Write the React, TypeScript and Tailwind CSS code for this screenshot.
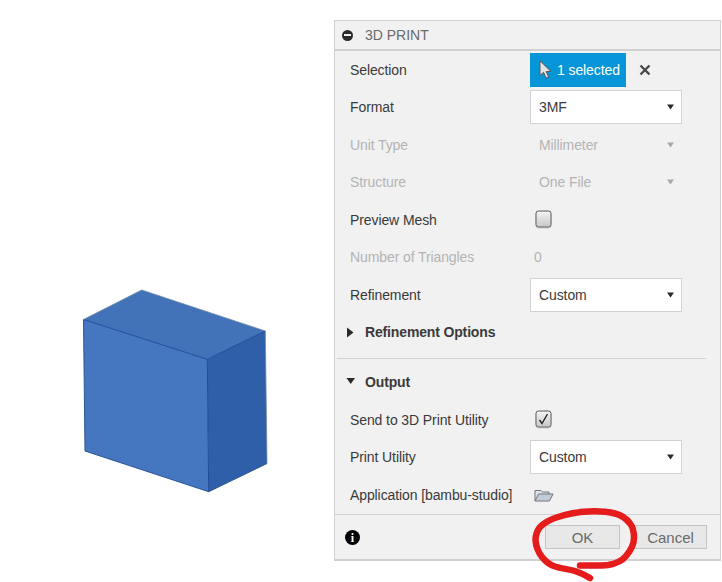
import React from "react";

const FONT = "font-['Liberation_Sans',Arial,sans-serif]";

function Caret({ disabled = false }: { disabled?: boolean }) {
  return (
    <svg width="7" height="6" viewBox="0 0 7 6" className="shrink-0">
      <path d="M0 0.5H7L3.5 5.5Z" fill={disabled ? "#a8a8a8" : "#2a2a2a"} />
    </svg>
  );
}

function Row({ label, disabled = false, children }: { label: string; disabled?: boolean; children?: React.ReactNode }) {
  return (
    <div className="h-[37.5px] flex items-center pl-[15px] shrink-0">
      <div className={`w-[180px] shrink-0 whitespace-nowrap tracking-[-0.1px] ${disabled ? "text-[#b4b4b4]" : "text-[#3a3a3a]"}`}>{label}</div>
      {children}
    </div>
  );
}

function Select({ value, disabled = false }: { value: string; disabled?: boolean }) {
  return (
    <div
      className={`w-[152px] h-[34px] flex items-center justify-between pl-[8px] pr-[7px] border tracking-[-0.1px] ${
        disabled ? "border-transparent text-[#b4b4b4]" : "bg-white border-[#d2d2d2] text-[#3a3a3a]"
      }`}
    >
      <span>{value}</span>
      <Caret disabled={disabled} />
    </div>
  );
}

function Check({ checked = false }: { checked?: boolean }) {
  return (
    <div className="ml-[6px] w-[16px] h-[17px] rounded-[3px] border border-[#555] bg-gradient-to-b from-[#f4f4f4] to-[#c8c8c8] flex items-center justify-center shadow-[0_1px_0_#cfcfcf] -translate-x-[0.5px] -translate-y-[0.5px]">
      {checked && (
        <svg width="12" height="13" viewBox="0 0 12 13">
          <path d="M2 7.500L4.500 11L10 1.500" fill="none" stroke="#222" strokeWidth="1.4" />
        </svg>
      )}
    </div>
  );
}

function Section({ label, open }: { label: string; open: boolean }) {
  return (
    <div className="flex items-center pl-[11px] gap-[10px] font-bold text-[#3a3a3a] tracking-[-0.15px]">
      <svg width="9" height="11" viewBox="0 0 9 11" className="shrink-0">
        {open ? <path d="M0.5 2H9L4.750 8Z" fill="#2a2a2a" /> : <path d="M1 0.5V10.5L7.500 5.500Z" fill="#2a2a2a" />}
      </svg>
      <span>{label}</span>
    </div>
  );
}

function Cube() {
  return (
    <svg width="186" height="204" viewBox="83 289 186 204" className="block">
      <polygon points="141.7,290 83.5,319.5 207.3,359.3 265.3,331" fill="#4273b8" />
      <polygon points="83.5,319.5 207.3,359.3 208.7,491.7 85,451" fill="#4576c0" />
      <polygon points="207.3,359.3 265.3,331 267,463.5 208.7,491.7" fill="#2e5fa8" />
      <path d="M83.5 319.5L207.3 359.3L265.3 331M207.3 359.3L208.7 491.7" fill="none" stroke="#1d4c9c" strokeWidth="1" />
      <path d="M83.5 319.5L85 451L208.7 491.7L267 463.5" fill="none" stroke="#2a5596" strokeWidth="1" />
      <path d="M83.5 319.5L141.7 290L265.3 331L267 463.5" fill="none" stroke="#6f87a8" strokeWidth="0.8" />
    </svg>
  );
}

export default function App() {
  return (
    <div className={`relative w-[722px] h-[582px] bg-white overflow-hidden flex text-[14px] leading-none ${FONT}`}>
      <div className="w-[334px] shrink-0 pl-[83px] pt-[289px]">
        <Cube />
      </div>

      <div className="w-[387px] h-[541px] mt-[20px] border-2 border-t border-[#d0d0d0] border-r border-l bg-[#f1f1f1] flex flex-col">
        <div className="h-[30px] shrink-0 border-b-2 border-[#d0d0d0] flex items-center pl-[7px] gap-[12px] text-[#6a6a6a]">
          <div className="w-[11px] h-[11px] rounded-full bg-[#2a2a2a] flex items-center justify-center">
            <div className="w-[7px] h-[2px] bg-[#f1f1f1]" />
          </div>
          <span>3D PRINT</span>
        </div>

        <div className="flex-1 flex flex-col">
          <Row label="Selection">
            <div className="w-[96px] h-[34px] bg-[#0696d7] flex items-center pl-[9px] gap-[5px] text-white tracking-[-0.1px]">
              <svg width="13" height="19" viewBox="0 0 13 19" className="shrink-0">
                <path d="M1 0.800V15.500L4.600 12.300L7 18L9.600 17L7.200 11.500H12Z" fill="#e2e2e2" stroke="#5a5a5a" strokeWidth="1" />
              </svg>
              <span className="whitespace-nowrap">1 selected</span>
            </div>
            <svg width="12" height="12" viewBox="0 0 12 12" className="ml-[13px]">
              <path d="M1.500 1.500L10.500 10.500M10.500 1.500L1.500 10.500" stroke="#4a4a4a" strokeWidth="2.4" />
            </svg>
          </Row>
          <Row label="Format"><Select value="3MF" /></Row>
          <Row label="Unit Type" disabled><Select value="Millimeter" disabled /></Row>
          <Row label="Structure" disabled><Select value="One File" disabled /></Row>
          <Row label="Preview Mesh"><Check /></Row>
          <Row label="Number of Triangles" disabled><span className="ml-[4px] text-[#b4b4b4]">0</span></Row>
          <Row label="Refinement"><Select value="Custom" /></Row>
          <div className="h-[37.5px] shrink-0 flex items-center"><Section label="Refinement Options" open={false} /></div>

          <div className="ml-[2px] w-[369px] h-[1px] bg-[#d2d2d2] mt-[7px] shrink-0" />

          <div className="h-[45px] shrink-0 flex items-center"><Section label="Output" open /></div>
          <div className="mt-[-3px]">
            <Row label="Send to 3D Print Utility"><Check checked /></Row>
            <Row label="Print Utility"><Select value="Custom" /></Row>
            <Row label="Application [bambu-studio]">
              <svg width="20" height="14" viewBox="0 0 20 14" className="ml-[4px]">
                <path d="M1 13V2.500H7L8.500 4H15V6" fill="#dfe4ea" stroke="#6f7780" strokeWidth="1" />
                <path d="M1 13L4.500 6H19L15.500 13Z" fill="#c3ccd6" stroke="#6f7780" strokeWidth="1" />
              </svg>
            </Row>
          </div>
        </div>

        <div className="h-[45px] shrink-0 border-t border-[#d2d2d2] flex items-center pl-[10px] pr-[13px]">
          <div className="w-[15px] h-[15px] mt-[1px] rounded-full bg-black flex items-center justify-center text-white font-bold text-[12px] font-['Liberation_Serif',serif]">i</div>
          <div className="ml-auto flex gap-[14px] text-[#6a6a6a] text-[15px]">
            <div className="w-[75px] h-[24px] bg-[#e8e8e8] border border-[#c4c4c4] flex items-center justify-center">OK</div>
            <div className="w-[73px] h-[24px] bg-[#e8e8e8] border border-[#c4c4c4] flex items-center justify-center">Cancel</div>
          </div>
        </div>
      </div>

      <svg width="722" height="582" viewBox="0 0 722 582" className="absolute inset-0 pointer-events-none">
        <path
          d="M580 565.500C590 565.500 600 566 608 565C617 563.500 622 561 626 556C631 550 634 545 634 538C634 531 633 527 630 523.500C626 518 621 515 615 513.500C607 511.500 598 511 588 511.500C577 512 567 514 558 517C550 519.500 544 523 540 527C537 531 535.500 535 535.500 540C536 546 538 552 542 557C546 562 550 565 555 566.500C561 568.500 568 569 575 571C581 573 586 575.500 590 578"
          fill="none"
          stroke="#e41c1c"
          strokeWidth="6.500"
          strokeLinecap="round"
          strokeLinejoin="round"
        />
      </svg>
    </div>
  );
}
